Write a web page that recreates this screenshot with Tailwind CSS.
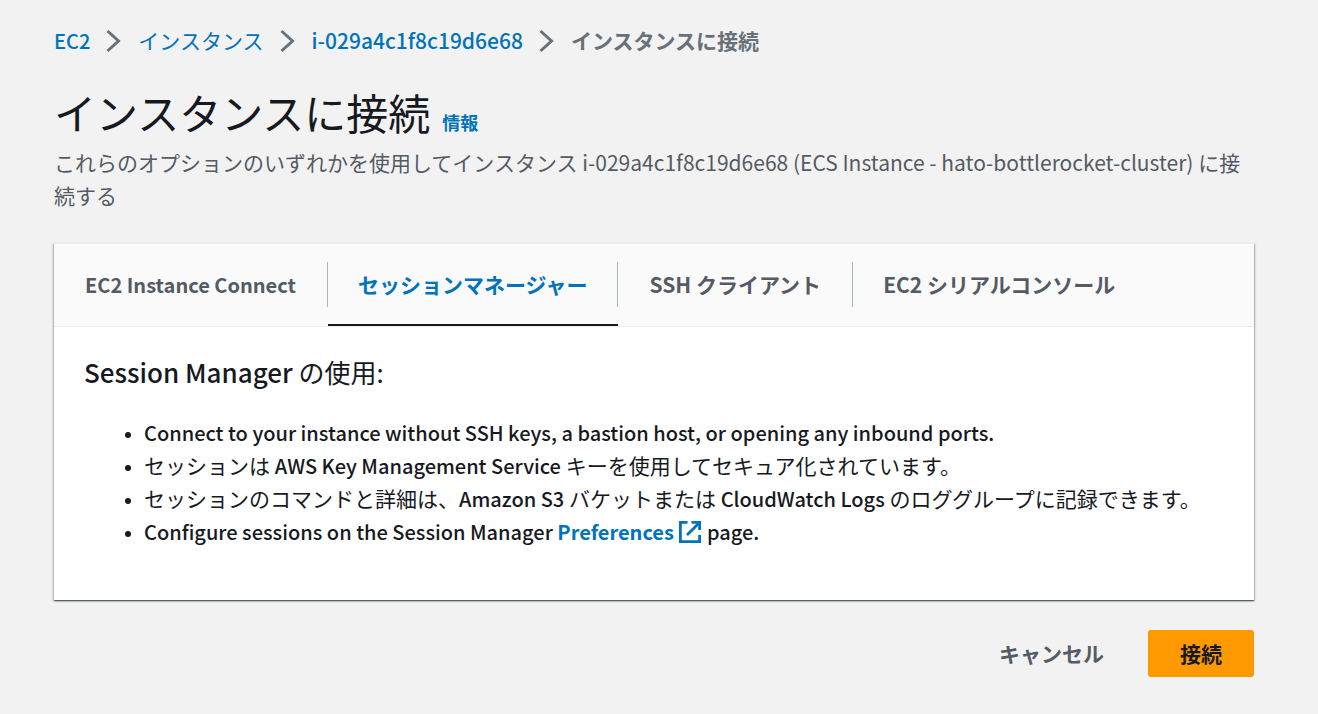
<!DOCTYPE html>
<html lang="ja">
<head>
<meta charset="utf-8">
<meta name="viewport" content="width=device-width, initial-scale=1">
<title>インスタンスに接続</title>
<script src="https://cdn.jsdelivr.net/npm/@tailwindcss/browser@4"></script>
</head>
<body class="min-h-screen bg-[#f2f2f2] pl-[54px] pr-16 pt-6 pb-9 font-['Noto_Sans_CJK_JP',sans-serif] text-[21px] leading-[33px] text-[#16191f]">
  <nav aria-label="パンくずリスト">
    <ol class="flex items-center gap-4 text-[#0073bb]">
      <li><a href="#" class="text-xl/[33px] font-medium">EC2</a></li>
      <li aria-hidden="true"><svg class="h-6 w-4" viewBox="0 0 16 24" fill="none" stroke="#687078" stroke-width="3"><path d="M1.500 2l11 10-11 10"/></svg></li>
      <li><a href="#">インスタンス</a></li>
      <li aria-hidden="true"><svg class="h-6 w-4" viewBox="0 0 16 24" fill="none" stroke="#687078" stroke-width="3"><path d="M1.500 2l11 10-11 10"/></svg></li>
      <li><a href="#" class="font-medium">i-029a4c1f8c19d6e68</a></li>
      <li aria-hidden="true"><svg class="h-6 w-4" viewBox="0 0 16 24" fill="none" stroke="#687078" stroke-width="3"><path d="M1.500 2l11 10-11 10"/></svg></li>
      <li class="font-bold text-[#687078]" aria-current="page">インスタンスに接続</li>
    </ol>
  </nav>

  <header class="mt-[25px]">
    <div class="flex items-baseline gap-3">
      <h1 class="text-[42px] leading-[60px]">インスタンスに接続</h1>
      <a href="#" class="text-lg font-bold text-[#0073bb]">情報</a>
    </div>
    <p class="mt-1 text-[#545b64]">これらのオプションのいずれかを使用してインスタンス i-029a4c1f8c19d6e68 (ECS Instance - hato-bottlerocket-cluster) に接続する</p>
  </header>

  <main class="mt-[31px] border-t border-[#eaeded] bg-white shadow-[0_1px_1px_0_rgba(0,28,36,0.5),1px_1px_2px_0_rgba(0,28,36,0.25),-1px_1px_2px_0_rgba(0,28,36,0.25)]">
    <div role="tablist" class="flex h-[83px] border-b border-[#eaeded] bg-[#fafafa] font-bold text-[#545b64]">
      <button type="button" role="tab" aria-selected="false" class="flex items-center pb-px"><span class="flex h-[45px] items-center border-r border-[#aab7b8] px-[31px] text-xl">EC2 Instance Connect</span></button>
      <button type="button" role="tab" aria-selected="true" class="flex items-center pb-px text-[#0073bb] shadow-[inset_0_-2px_0_#16191f]"><span class="flex h-[45px] items-center border-r border-[#aab7b8] px-[30px]">セッションマネージャー</span></button>
      <button type="button" role="tab" aria-selected="false" class="flex items-center pb-px"><span class="flex h-[45px] items-center border-r border-[#aab7b8] px-[31px]">SSH クライアント</span></button>
      <button type="button" role="tab" aria-selected="false" class="flex items-center pb-px"><span class="flex h-[45px] items-center px-[30px]">EC2 シリアルコンソール</span></button>
    </div>
    <section role="tabpanel" class="px-[30px] pt-7 pb-[52px]">
      <h2 class="text-[26px] leading-[33px]"><span class="font-medium">Session Manager</span> の使用:</h2>
      <ul class="mt-7 list-disc pl-[30px] marker:text-base">
        <li class="ml-[30px]"><span class="text-xl/[33px] font-medium">Connect to your instance without SSH keys, a bastion host, or opening any inbound ports.</span></li>
        <li class="ml-[30px]">セッションは <span class="text-xl/[33px] font-medium">AWS Key Management Service</span> キーを使用してセキュア化されています。</li>
        <li class="ml-[30px]">セッションのコマンドと詳細は、<span class="text-xl/[33px] font-medium">Amazon S3</span> バケットまたは <span class="text-xl/[33px] font-medium">CloudWatch Logs</span> のロググループに記録できます。</li>
        <li class="ml-[30px]"><span class="text-xl/[33px] font-medium">Configure sessions on the Session Manager <a href="#" class="font-bold text-[#0073bb]">Preferences <svg class="inline h-6 w-6 align-[-4px]" viewBox="0 0 24 24" fill="none" stroke="currentColor" stroke-width="2.8" aria-hidden="true"><path d="M9.500 2.400H2.400v19.200h19.200v-6.600M13.500 2.400h8.100v7.600M21.600 2.400L9 15"/></svg></a> page.</span></li>
      </ul>
    </section>
  </main>

  <footer class="mt-[30px] flex justify-end gap-3 font-bold">
    <button type="button" class="h-[47px] px-8 text-[#545b64]">キャンセル</button>
    <button type="button" class="h-[47px] rounded-[3px] bg-[#ff9900] px-8">接続</button>
  </footer>
</body>
</html>
